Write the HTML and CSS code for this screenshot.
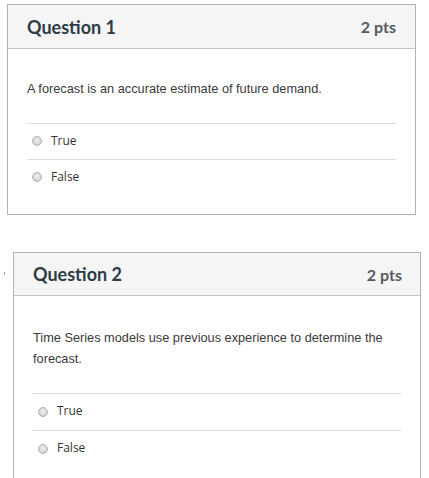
FILE: index.html
```html
<!DOCTYPE html>
<html>
<head>
<meta charset="utf-8">
<link rel="stylesheet" href="styles.css">
</head>
<body>
<div class="page">
  <section class="card card-one">
    <header class="card-head">
      <h2 class="q-title">Question 1</h2>
      <span class="q-pts">2 pts</span>
    </header>
    <div class="card-body">
      <p class="q-text">A forecast is an accurate estimate of future demand.</p>
      <ul class="answers">
        <li class="answer"><span class="radio"></span><span class="label">True</span></li>
        <li class="answer"><span class="radio"></span><span class="label">False</span></li>
      </ul>
    </div>
  </section>

  <section class="card card-two">
    <span class="tick"></span>
    <header class="card-head">
      <h2 class="q-title">Question 2</h2>
      <span class="q-pts">2 pts</span>
    </header>
    <div class="card-body">
      <p class="q-text">Time Series models use previous experience to determine the forecast.</p>
      <ul class="answers">
        <li class="answer"><span class="radio"></span><span class="label">True</span></li>
        <li class="answer"><span class="radio"></span><span class="label">False</span></li>
      </ul>
    </div>
  </section>
</div>
</body>
</html>
```

FILE: styles.css
```css
html, body {
  margin: 0;
  padding: 0;
  background: #ffffff;
  height: 478px;
  overflow: hidden;
}

.page {
  padding: 4px 0 0 7px;
  display: flex;
  flex-direction: column;
  align-items: flex-start;
}

.card {
  box-sizing: border-box;
  border: 1px solid #b3b3b3;
  background: #fff;
  position: relative;
}

.card-one {
  width: 409px;
  height: 211px;
}

.card-two {
  width: 408px;
  margin-top: 37px;
  margin-left: 6px;
  height: 240px;
}

.tick {
  position: absolute;
  left: -10px;
  top: 19px;
  width: 1px;
  height: 3px;
  background: #9a9a9a;
}

.card-head {
  display: flex;
  justify-content: space-between;
  align-items: center;
  height: 43px;
  padding: 0 19px 0 19px;
  background: #f5f5f5;
  border-bottom: 1px solid #c4c4c4;
}

.card-two .card-head {
  height: 42px;
  padding: 0 18px 0 19px;
}

.q-title {
  margin: 0;
  font-family: Lato, "Liberation Sans", sans-serif;
  font-weight: 700;
  font-size: 18px;
  color: #2d3b45;
}

.q-pts {
  font-family: Lato, "Liberation Sans", sans-serif;
  font-weight: 700;
  font-size: 16px;
  color: #555a5e;
}

.card-body {
  padding: 29px 19px 0 19px;
}

.card-two .card-body {
  padding-top: 31px;
}

.q-text {
  margin: 0 0 24px 0;
  font-family: "Liberation Sans", Arial, sans-serif;
  font-size: 12.75px;
  line-height: 21px;
  color: #3a3a3a;
}

.answers {
  list-style: none;
  margin: 0;
  padding: 0;
}

.answer {
  box-sizing: border-box;
  display: flex;
  align-items: center;
  height: 36px;
  padding: 0 0 3px 5px;
  border-top: 1px solid #dcdcdc;
}

.card-two .answer {
  height: 37px;
}

.radio {
  box-sizing: border-box;
  width: 10px;
  height: 10px;
  margin-top: 2px;
  border-radius: 50%;
  border: 1px solid #b0b0b0;
  background: radial-gradient(circle at 50% 40%, #eeeeee 0%, #d4d4d4 70%, #c4c4c4 100%);
  margin-right: 9px;
}

.label {
  font-family: "Open Sans", "Liberation Sans", sans-serif;
  font-size: 12px;
  color: #333;
}
```
